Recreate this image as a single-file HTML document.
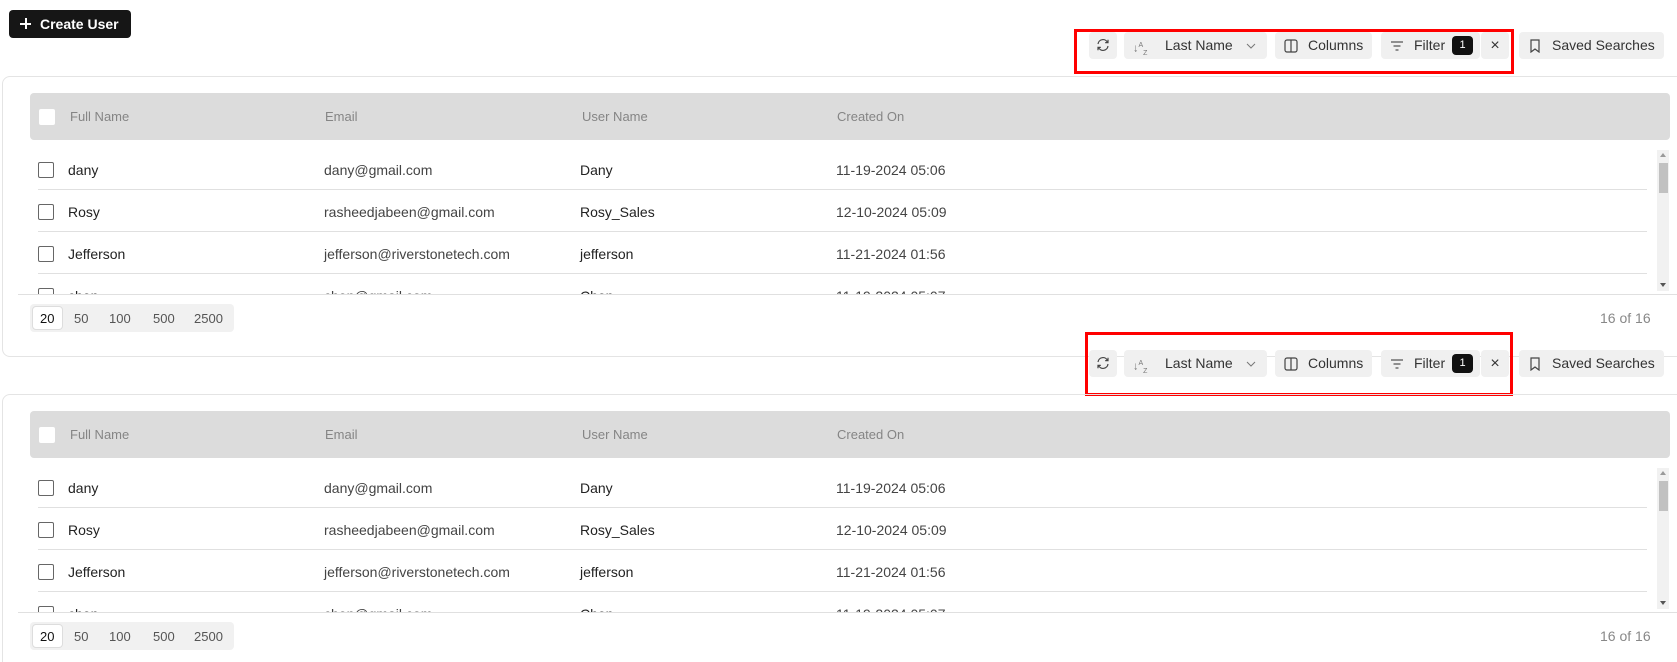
<!DOCTYPE html>
<html style="overflow:hidden;height:662px"><head><meta charset="utf-8"><style>
*{box-sizing:border-box;margin:0;padding:0}
body{width:1677px;height:662px;overflow:hidden;background:#fff;font-family:"Liberation Sans",sans-serif;position:relative}
.a{position:absolute}
.cu{left:9px;top:10px;width:122px;height:28px;background:#161616;border-radius:4px;color:#fff;font-weight:bold;font-size:14px;line-height:28px;padding-left:31px}
.cu:before{content:"";position:absolute;left:11px;top:13px;width:11px;height:1.5px;background:#fff}
.cu:after{content:"";position:absolute;left:16px;top:8px;width:1.5px;height:11px;background:#fff}
.blk{position:absolute;left:0;width:1677px;height:330px}
.btn{position:absolute;top:32px;height:27px;background:#f0f0f0;border-radius:4px;font-size:14px;color:#333;line-height:27px}
.red{position:absolute;border:3.5px solid #f00}
.card{position:absolute;left:2px;top:76px;width:1690px;height:281px;border:1px solid #e4e4e4;border-radius:8px}
.hdr{position:absolute;left:30px;top:93px;width:1640px;height:47px;background:#dcdcdc;border-radius:4px}
.hdr span{position:absolute;top:16px;font-size:13px;color:#858585}
.cb{position:absolute;width:16px;height:16px;border:1.5px solid #666;border-radius:2px;background:#fff}
.rows{position:absolute;left:0;top:150px;width:1677px;height:144px;overflow:hidden}
.row{position:absolute;left:0;width:1677px;height:42px;font-size:14px;color:#222}
.row span{position:absolute;top:12px}
.row .e,.row .d{color:#444}
.sep{position:absolute;left:38px;width:1609px;height:1px;background:#e0e0e0}
.pg{position:absolute;left:30px;top:304px;width:204px;height:28px;background:#f1f1f1;border-radius:4px;font-size:13px;color:#555}
.pg span{position:absolute;top:7px}
.cnt{position:absolute;left:1600px;top:310px;font-size:14px;color:#888}
</style></head><body>
<div class="a cu">Create User</div>

<div class="blk" style="top:0">
<div class="btn" style="left:1089px;width:28px"><svg class="a" style="left:7px;top:6px" width="14" height="14" viewBox="0 0 14 14" fill="none" stroke="#444" stroke-width="1.2"><path d="M2 6A5 5 0 0 1 11.5 4.5M12 1.8v2.8H9.2M12 8A5 5 0 0 1 2.5 9.5M2 12.2V9.4h2.8"/></svg></div>
<div class="btn" style="left:1124px;width:143px"><span class="a" style="left:9px;top:0;font-size:11px;color:#777">↓<sup style="font-size:7px">A</sup><sub style="font-size:7px">Z</sub></span><span class="a" style="left:41px">Last Name</span><svg class="a" style="left:122px;top:11px" width="10" height="6" viewBox="0 0 10 6" fill="none" stroke="#777"><path d="M1 1l4 4 4-4"/></svg></div>
<div class="btn" style="left:1275px;width:97px"><svg class="a" style="left:9px;top:7px" width="14" height="14" viewBox="0 0 14 14" fill="none" stroke="#444" stroke-width="1.2"><rect x="1" y="1" width="12" height="12" rx="2"/><path d="M7 1v12"/></svg><span class="a" style="left:33px">Columns</span></div>
<div class="btn" style="left:1381px;width:99px"><svg class="a" style="left:9px;top:8px" width="14" height="12" viewBox="0 0 14 12" fill="none" stroke="#555" stroke-width="1.2"><path d="M1 2h12M3.5 6h7M5.5 10h3"/></svg><span class="a" style="left:33px">Filter</span><span class="a" style="left:71px;top:4px;width:21px;height:19px;background:#111;border-radius:4px;color:#fff;font-size:11px;line-height:19px;text-align:center">1</span></div>
<div class="btn" style="left:1481px;width:28px;text-align:center;font-size:16px">×</div>
<div class="btn" style="left:1519px;width:145px"><svg class="a" style="left:10px;top:7px" width="12" height="14" viewBox="0 0 12 14" fill="none" stroke="#444" stroke-width="1.2"><path d="M2 1h8v12L6 10l-4 3z"/></svg><span class="a" style="left:33px">Saved Searches</span></div>
<div class="red" style="left:1074px;top:29px;width:440px;height:45px"></div>
<div class="card"></div>
<div class="hdr"><div class="cb" style="left:9px;top:16px;border:none"></div><span style="left:40px">Full Name</span><span style="left:295px">Email</span><span style="left:552px">User Name</span><span style="left:807px">Created On</span></div>
<div class="rows">
<div class="row" style="top:0"><div class="cb" style="left:38px;top:12px"></div><span style="left:68px">dany</span><span class="e" style="left:324px">dany@gmail.com</span><span style="left:580px">Dany</span><span class="d" style="left:836px">11-19-2024 05:06</span></div>
<div class="sep" style="top:39px"></div>
<div class="row" style="top:42px"><div class="cb" style="left:38px;top:12px"></div><span style="left:68px">Rosy</span><span class="e" style="left:324px">rasheedjabeen@gmail.com</span><span style="left:580px">Rosy_Sales</span><span class="d" style="left:836px">12-10-2024 05:09</span></div>
<div class="sep" style="top:81px"></div>
<div class="row" style="top:84px"><div class="cb" style="left:38px;top:12px"></div><span style="left:68px">Jefferson</span><span class="e" style="left:324px">jefferson@riverstonetech.com</span><span style="left:580px">jefferson</span><span class="d" style="left:836px">11-21-2024 01:56</span></div>
<div class="sep" style="top:123px"></div>
<div class="row" style="top:126px"><div class="cb" style="left:38px;top:12px"></div><span style="left:68px">chen</span><span class="e" style="left:324px">chen@gmail.com</span><span style="left:580px">Chen</span><span class="d" style="left:836px">11-19-2024 05:07</span></div>
<div class="a" style="left:1657px;top:0;width:12px;height:141px;background:#f1f1f1"></div>
<div class="a" style="left:1659px;top:13px;width:9px;height:30px;background:#c1c1c1"></div>
<div class="a" style="left:1660px;top:3px;width:0;height:0;border:3.5px solid transparent;border-bottom:4px solid #999;border-top:none"></div>
<div class="a" style="left:1660px;top:133px;width:0;height:0;border:3.5px solid transparent;border-top:4px solid #555;border-bottom:none"></div>
</div>
<div class="a" style="left:18px;top:294px;width:1659px;height:1px;background:#e0e0e0"></div>
<div class="pg"><div class="a" style="left:2px;top:2px;width:31px;height:24px;background:#fff;border:1px solid #ddd;border-radius:4px"></div><span style="left:10px;color:#111">20</span><span style="left:44px">50</span><span style="left:79px">100</span><span style="left:123px">500</span><span style="left:164px">2500</span></div>
<div class="cnt">16 of 16</div>
</div>

<div class="blk" style="top:318px;height:344px;overflow:hidden">
<div class="btn" style="left:1089px;width:28px"><svg class="a" style="left:7px;top:6px" width="14" height="14" viewBox="0 0 14 14" fill="none" stroke="#444" stroke-width="1.2"><path d="M2 6A5 5 0 0 1 11.5 4.5M12 1.8v2.8H9.2M12 8A5 5 0 0 1 2.5 9.5M2 12.2V9.4h2.8"/></svg></div>
<div class="btn" style="left:1124px;width:143px"><span class="a" style="left:9px;top:0;font-size:11px;color:#777">↓<sup style="font-size:7px">A</sup><sub style="font-size:7px">Z</sub></span><span class="a" style="left:41px">Last Name</span><svg class="a" style="left:122px;top:11px" width="10" height="6" viewBox="0 0 10 6" fill="none" stroke="#777"><path d="M1 1l4 4 4-4"/></svg></div>
<div class="btn" style="left:1275px;width:97px"><svg class="a" style="left:9px;top:7px" width="14" height="14" viewBox="0 0 14 14" fill="none" stroke="#444" stroke-width="1.2"><rect x="1" y="1" width="12" height="12" rx="2"/><path d="M7 1v12"/></svg><span class="a" style="left:33px">Columns</span></div>
<div class="btn" style="left:1381px;width:99px"><svg class="a" style="left:9px;top:8px" width="14" height="12" viewBox="0 0 14 12" fill="none" stroke="#555" stroke-width="1.2"><path d="M1 2h12M3.5 6h7M5.5 10h3"/></svg><span class="a" style="left:33px">Filter</span><span class="a" style="left:71px;top:4px;width:21px;height:19px;background:#111;border-radius:4px;color:#fff;font-size:11px;line-height:19px;text-align:center">1</span></div>
<div class="btn" style="left:1481px;width:28px;text-align:center;font-size:16px">×</div>
<div class="btn" style="left:1519px;width:145px"><svg class="a" style="left:10px;top:7px" width="12" height="14" viewBox="0 0 12 14" fill="none" stroke="#444" stroke-width="1.2"><path d="M2 1h8v12L6 10l-4 3z"/></svg><span class="a" style="left:33px">Saved Searches</span></div>
<div class="red" style="left:1085px;top:14px;width:428px;height:64px"></div>
<div class="card" style="height:300px"></div>
<div class="hdr"><div class="cb" style="left:9px;top:16px;border:none"></div><span style="left:40px">Full Name</span><span style="left:295px">Email</span><span style="left:552px">User Name</span><span style="left:807px">Created On</span></div>
<div class="rows">
<div class="row" style="top:0"><div class="cb" style="left:38px;top:12px"></div><span style="left:68px">dany</span><span class="e" style="left:324px">dany@gmail.com</span><span style="left:580px">Dany</span><span class="d" style="left:836px">11-19-2024 05:06</span></div>
<div class="sep" style="top:39px"></div>
<div class="row" style="top:42px"><div class="cb" style="left:38px;top:12px"></div><span style="left:68px">Rosy</span><span class="e" style="left:324px">rasheedjabeen@gmail.com</span><span style="left:580px">Rosy_Sales</span><span class="d" style="left:836px">12-10-2024 05:09</span></div>
<div class="sep" style="top:81px"></div>
<div class="row" style="top:84px"><div class="cb" style="left:38px;top:12px"></div><span style="left:68px">Jefferson</span><span class="e" style="left:324px">jefferson@riverstonetech.com</span><span style="left:580px">jefferson</span><span class="d" style="left:836px">11-21-2024 01:56</span></div>
<div class="sep" style="top:123px"></div>
<div class="row" style="top:126px"><div class="cb" style="left:38px;top:12px"></div><span style="left:68px">chen</span><span class="e" style="left:324px">chen@gmail.com</span><span style="left:580px">Chen</span><span class="d" style="left:836px">11-19-2024 05:07</span></div>
<div class="a" style="left:1657px;top:0;width:12px;height:141px;background:#f1f1f1"></div>
<div class="a" style="left:1659px;top:13px;width:9px;height:30px;background:#c1c1c1"></div>
<div class="a" style="left:1660px;top:3px;width:0;height:0;border:3.5px solid transparent;border-bottom:4px solid #999;border-top:none"></div>
<div class="a" style="left:1660px;top:133px;width:0;height:0;border:3.5px solid transparent;border-top:4px solid #555;border-bottom:none"></div>
</div>
<div class="a" style="left:18px;top:294px;width:1659px;height:1px;background:#e0e0e0"></div>
<div class="pg"><div class="a" style="left:2px;top:2px;width:31px;height:24px;background:#fff;border:1px solid #ddd;border-radius:4px"></div><span style="left:10px;color:#111">20</span><span style="left:44px">50</span><span style="left:79px">100</span><span style="left:123px">500</span><span style="left:164px">2500</span></div>
<div class="cnt">16 of 16</div>
</div>
</body></html>
